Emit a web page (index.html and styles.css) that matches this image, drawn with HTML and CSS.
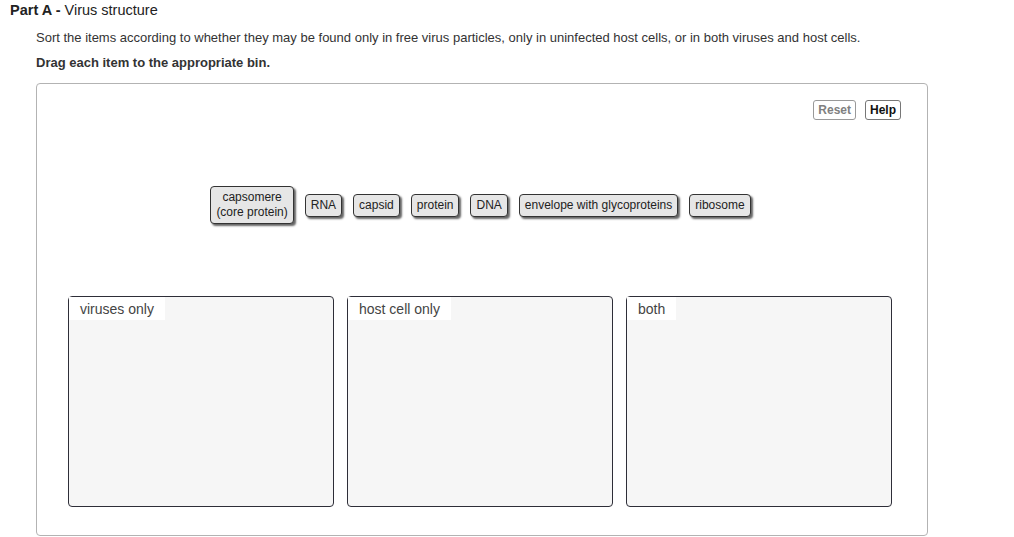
FILE: index.html
```html
<!DOCTYPE html>
<html lang="en">
<head>
    <meta charset="UTF-8">
    <title>Part A - Virus structure</title>
    <link rel="stylesheet" href="styles.css">
</head>
<body>
    <h2 class="part-title"><strong>Part A -</strong> Virus structure</h2>
    <div class="question">
        <p class="prompt">Sort the items according to whether they may be found only in free virus particles, only in uninfected host cells, or in both viruses and host cells.</p>
        <p class="directions">Drag each item to the appropriate bin.</p>

        <div class="dnd-box">
            <div class="tools">
                <button class="tool-btn disabled">Reset</button>
                <button class="tool-btn">Help</button>
            </div>

            <div class="tiles">
                <div class="tile">capsomere<br>(core protein)</div>
                <div class="tile">RNA</div>
                <div class="tile">capsid</div>
                <div class="tile">protein</div>
                <div class="tile">DNA</div>
                <div class="tile">envelope with glycoproteins</div>
                <div class="tile">ribosome</div>
            </div>

            <div class="bins">
                <div class="bin"><span class="bin-label">viruses only</span></div>
                <div class="bin"><span class="bin-label">host cell only</span></div>
                <div class="bin"><span class="bin-label">both</span></div>
            </div>
        </div>
    </div>
</body>
</html>
```

FILE: styles.css
```css
body { font-family: "Liberation Sans", Arial, sans-serif; margin: 0; padding: 0 10px; color: #333; background: #fff; }
.part-title { font-size: 14.5px; font-weight: normal; margin: 2px 0 0; line-height: 16px; color: #222; }
.part-title strong { font-weight: bold; }
.question { padding-left: 26px; }
.prompt { font-size: 13px; margin: 12px 0 0; line-height: 16px; }
.directions { font-size: 13px; font-weight: bold; margin: 9px 0 0; line-height: 16px; }

.dnd-box { width: 892px; height: 453px; margin-top: 12px; border: 1px solid #b3b3b3; border-radius: 4px; box-sizing: border-box; padding: 16px 35px 0 31px; }

.tools { display: flex; justify-content: flex-end; gap: 9px; margin-right: -9px; }
.tool-btn { font-family: inherit; font-size: 12px; font-weight: bold; line-height: 16px; padding: 1px 4px; background: #fff; border: 1px solid #777; border-radius: 3px; color: #111; }
.tool-btn.disabled { color: #808080; border-color: #999; }

.tiles { display: flex; justify-content: center; align-items: center; gap: 11px; margin: 64px 0 0 1px; height: 42px; }
.tile { font-size: 12px; line-height: 15px; text-align: center; padding: 3px 5px; background: #e6e6e6; border: 1px solid #333; border-radius: 4px; box-shadow: 2px 2px 2px #666; color: #222; }

.bins { display: flex; gap: 13px; margin-top: 70px; }
.bin { width: 266px; height: 211px; box-sizing: border-box; background: #f6f6f6; border: 1px solid #2e2e38; border-radius: 4px; }
.bin-label { display: inline-block; background: #fff; font-size: 14px; line-height: 22px; padding: 1px 11px 0 11px; color: #444; }
```
